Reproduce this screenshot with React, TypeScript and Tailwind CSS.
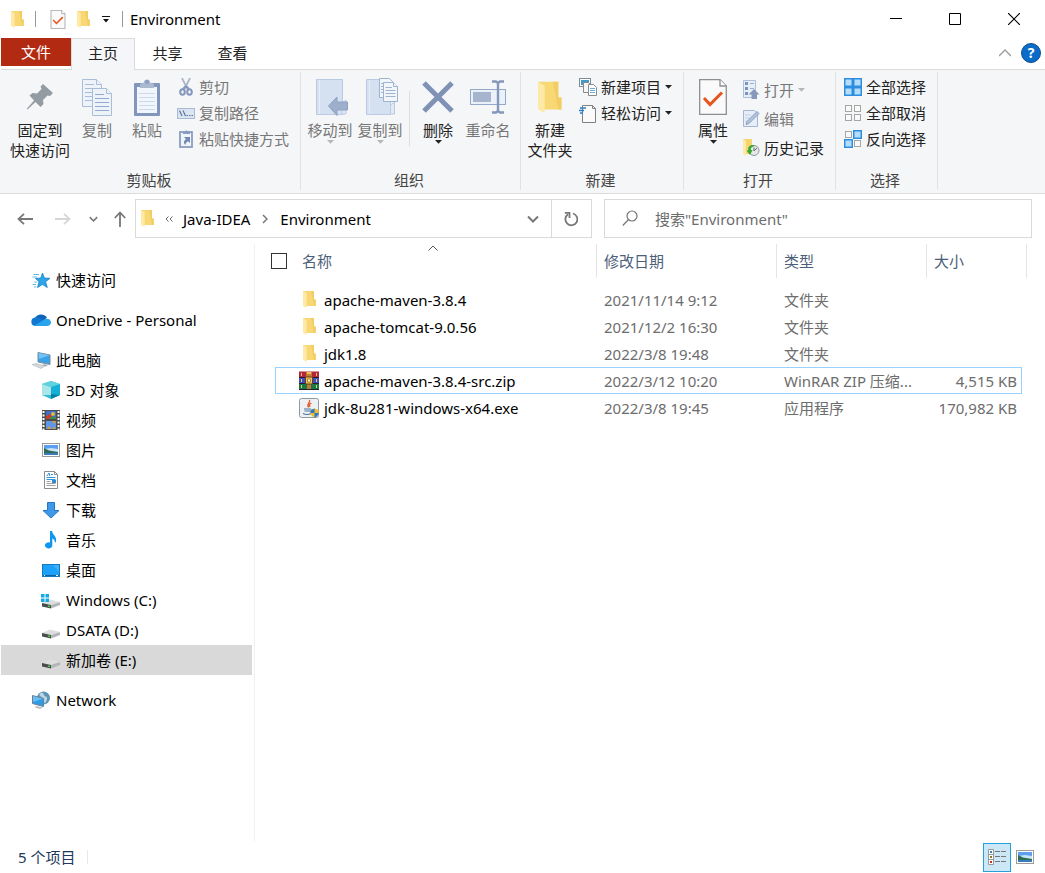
import type { ReactNode } from 'react';
import clsx from 'clsx';

interface IconProps {
  className?: string;
}

const FolderIcon = ({ className = 'h-[17px] w-[13px]' }: IconProps) => (
  <svg viewBox="0 0 13 17" className={className} aria-hidden>
    <path d="M0 0H11V8.5H12.7V15H3L0 14Z" fill="#f8d775" />
    <path d="M8 0H11V8.5H12.7V15H11Z" fill="#f3cd63" />
    <path d="M0 0L3.6 2V17L0 14.8Z" fill="#ffe9a6" />
  </svg>
);

const CheckDocIcon = ({ className }: IconProps) => (
  <svg viewBox="0 0 28 36" className={className} aria-hidden>
    <path d="M.7 .7H21L27.3 7V35.3H.7Z" fill="#fafafa" stroke="#8e8e8e" strokeWidth="1.3" />
    <path d="M21 .7V7H27.3" fill="#fff" stroke="#8e8e8e" strokeWidth="1.3" />
    <path d="M5 19L11 25.5L23 13.5" fill="none" stroke="#e8541c" strokeWidth="3" />
  </svg>
);

const PinIcon = () => (
  <svg width="28" height="28" viewBox="0 0 28 28" aria-hidden>
    <path
      d="M17 1L27 10L24 13L21.500 12.500L17 17L17.500 21L14.500 24L9.500 19L1.500 26.500L.8 25.800L8 17.500L3.500 12.500L6.500 10L11 10.500L15.500 6L14.500 3.500Z"
      fill="#949ca3"
    />
  </svg>
);

const CopyIcon = () => (
  <svg width="32" height="37" viewBox="0 0 32 37" aria-hidden>
    <g fill="#eef3fa" stroke="#a9bcd8">
      <path d="M1.500 .5H15.500L20.500 5.500V27.500H1.500Z" />
      <path d="M15.500 .5V5.500H20.500" />
      <path d="M4 5.500H13M4 9.500H17M4 13.500H11M4 17.500H11M4 21.500H11" />
      <path d="M11.500 9.500H25.500L30.500 14.500V36.500H11.500Z" />
      <path d="M25.500 9.500V14.500H30.500" />
      <path d="M14 15.500H23M14 19.500H28M14 23.500H28M14 27.500H28M14 31.500H28" stroke="#93abcf" />
    </g>
  </svg>
);

const PasteIcon = () => (
  <svg width="28" height="37" viewBox="0 0 28 37" aria-hidden>
    <rect x="1" y="4" width="26" height="33" rx="1" fill="#8296bd" />
    <rect x="4" y="8" width="20" height="26" fill="#f1f6fc" />
    <path d="M6 14.500H22M6 18.500H22M6 22.500H22M6 26.500H22M6 30.500H22" stroke="#ccd9ea" />
    <path d="M7 9V5L11 3.500A3 3 0 0 1 17 3.500L21 5V9Z" fill="#aab8d0" />
    <circle cx="14" cy="3" r="2" fill="#8b9dc0" />
  </svg>
);

const CutIcon = () => (
  <svg width="18" height="18" viewBox="0 0 18 18" aria-hidden>
    <path d="M5 0L11 12M13 0L7 12" stroke="#a9b4c8" strokeWidth="1.700" />
    <g fill="none" stroke="#8396bd" strokeWidth="2">
      <ellipse cx="5.500" cy="14" rx="2.300" ry="2.800" />
      <ellipse cx="12.500" cy="14" rx="2.300" ry="2.800" />
    </g>
    <path d="M9 8L12 11M9 8L6 11" stroke="#8396bd" strokeWidth="2" />
  </svg>
);

const CopyPathIcon = () => (
  <svg width="18" height="18" viewBox="0 0 18 18" aria-hidden>
    <rect x=".5" y="4.500" width="17" height="10" fill="#dbe5f2" stroke="#a9bad4" />
    <path d="M2.500 6.500L5 12M6 6.500L8.500 12" stroke="#5d759f" strokeWidth="1.200" />
    <path d="M9.500 11.500H11M12 11.500H13.500M14.500 11.500H16" stroke="#5d759f" />
  </svg>
);

const PasteShortcutIcon = () => (
  <svg width="18" height="20" viewBox="0 0 18 20" aria-hidden>
    <rect x="3" y="3" width="12" height="15" fill="#f0f5fb" stroke="#8a9dc0" strokeWidth="1.800" />
    <path d="M6 5V2.500H8A1.700 1.700 0 0 1 11 2.500H13V5Z" fill="#8a9dc0" />
    <path d="M7 8H13V14L11 12.200C9.500 13 8.500 14 8.500 16C6.200 14 6.600 11.500 9 10.200Z" fill="#7389b3" />
  </svg>
);

const MoveToIcon = () => (
  <svg width="36" height="38" viewBox="-3 0 36 38" aria-hidden>
    <path d="M1.500 1.500H27.500V36.500H1.500Z" fill="#d5e1f1" stroke="#b9cae2" />
    <path d="M4.500 2V36" stroke="#e6eef8" />
    <path d="M27 25L31 22V36H27Z" fill="#e1eaf5" stroke="#b9cae2" />
    <path d="M13.500 28L22 19V24H32.500V32H22V37.500Z" fill="#9dafcb" stroke="#8da2c4" />
  </svg>
);

const CopyToIcon = () => (
  <svg width="36" height="38" viewBox="-3 0 36 38" aria-hidden>
    <path d="M1.500 1.500H25.500V36.500H1.500Z" fill="#d5e1f1" stroke="#b9cae2" />
    <path d="M4.500 2V36" stroke="#e6eef8" />
    <path d="M25.500 36V27L29.500 24V36Z" fill="#e1eaf5" stroke="#b9cae2" />
    <g fill="#f2f6fb" stroke="#9fb3d1">
      <path d="M14.500 .5H24.500L27.500 3.500V19.500H14.500Z" />
      <path d="M16 5.500H22M16 8.500H19M16 11.500H19M16 14.500H19" />
      <path d="M18.500 4.500H28.500L32.500 8.500V23.500H18.500Z" />
      <path d="M28.500 4.500V8.500H32.500M20.500 9.500H27M20.500 12.500H30.500M20.500 15.500H30.500M20.500 18.500H30.500" />
    </g>
  </svg>
);

const DeleteIcon = () => (
  <svg width="32" height="32" viewBox="0 0 32 32" aria-hidden>
    <path d="M2 2L30 30M30 2L2 30" stroke="#7f92b6" strokeWidth="5" />
  </svg>
);

const RenameIcon = () => (
  <svg width="36" height="34" viewBox="0 0 36 34" aria-hidden>
    <rect x=".5" y="9.500" width="35" height="15" fill="#eaf1f9" stroke="#94a9ca" />
    <rect x="3" y="12" width="18" height="10" fill="#a6b4ce" />
    <path d="M22 1.500H26L28 3L30 1.500H34M28 2.500V31.500M22 32.500H26L28 31L30 32.500H34" fill="none" stroke="#8497bc" strokeWidth="2.400" />
  </svg>
);

const NewItemIcon = () => (
  <svg width="18" height="18" viewBox="0 0 18 18" aria-hidden>
    <rect x=".5" y=".5" width="11" height="8" fill="#fff" stroke="#7e8c96" />
    <rect x="2" y="2" width="8" height="5" fill="#4199c6" />
    <path d="M4.500 4.500H9.500L11.500 6.500V14.500H4.500Z" fill="#f5f5f5" stroke="#8b8b8b" />
    <path d="M9.500 6.500H14.500L17.500 9.500V17.500H9.500Z" fill="#fff" stroke="#8b8b8b" />
    <path d="M11 10.500H16M11 12.500H16M11 14.500H16" stroke="#68aeda" />
  </svg>
);

const EasyAccessIcon = () => (
  <svg width="18" height="19" viewBox="0 0 18 19" aria-hidden>
    <path d="M3.500 1.500H13.500L16.500 4.500V18.500H3.500Z" fill="#fafafa" stroke="#818181" />
    <path d="M13.500 1.500V4.500H16.500" fill="none" stroke="#818181" />
    <path d="M1 4H7M0 6.500H5M1 9H4" stroke="#2b7fc3" strokeWidth="1.400" />
  </svg>
);

const OpenIcon = () => (
  <svg width="18" height="19" viewBox="0 0 18 19" aria-hidden>
    <path d="M1.500 .5H13.500V17.500H1.500Z" fill="#e6eef8" stroke="#aebfd8" />
    <path d="M3 2H6V5H3ZM3 7H6V10H3ZM3 12H6V15H3Z" fill="#7e93b8" />
    <path d="M8 3.500H12M8 8.500H12" stroke="#9cb0ce" />
    <path d="M12 9L17.500 14.500H15V19H9.500V14.500H6.500Z" fill="#8699bd" />
  </svg>
);

const EditIcon = () => (
  <svg width="18" height="19" viewBox="0 0 18 19" aria-hidden>
    <path d="M1.500 1.500H12.500L15.500 4.500V17.500H1.500Z" fill="#e6eef8" stroke="#a4b6d2" />
    <path d="M3 6H9M3 9H8M3 12H6" stroke="#c3d1e4" />
    <path d="M4 15.500L5 12.500L15 2.500L17 4.500L7 14.500Z" fill="#b4c3da" stroke="#8ba0c3" />
  </svg>
);

const HistoryIcon = () => (
  <svg width="18" height="19" viewBox="0 0 18 19" aria-hidden>
    <path d="M1 1H10V16H4L1 15Z" fill="#f6d470" />
    <path d="M1 1L4 3V18L1 16Z" fill="#ffe9a6" />
    <circle cx="12" cy="12.500" r="5" fill="#e5e8e8" stroke="#8e9695" />
    <path d="M12 9.500V13L15 10" fill="none" stroke="#5f6a6e" />
    <path d="M12 7C7.500 6.500 5.500 9.500 6.500 12.500L4.500 12.500L8 17L10.500 12H8.800C8.500 10 10 8.500 12 8.500Z" fill="#34a82f" />
  </svg>
);

const squares = [
  [0, 0],
  [9, 0],
  [0, 9],
  [9, 9],
];

// `filled` lists the squares that are highlighted, in reading order.
const SelectIcon = ({ filled }: { filled: number[] }) => (
  <svg width="18" height="18" viewBox="0 0 18 18" aria-hidden>
    {squares.map(([x, y], i) =>
      filled.includes(i) ? (
        <rect key={i} x={x + 0.75} y={y + 0.75} width="7.500" height="7.500" fill="#b4ddfb" stroke="#2d8ee0" strokeWidth="1.500" />
      ) : (
        <rect key={i} x={x + 1.5} y={y + 1.5} width="6" height="6" fill="#fafafa" stroke="#a5a5a5" />
      ),
    )}
  </svg>
);

const StarIcon = () => (
  <svg width="20" height="20" viewBox="0 0 20 20" aria-hidden>
    <path d="M2.500 4.500H8M1.500 7H6M3.500 12H6M1.500 14.500H5M3 17H5" stroke="#5fb8ef" />
    <path d="M11.500 3L13.300 8L19 8.300L14.600 11.700L16.300 17.500L11.500 14.400L6.500 17.500L8.100 11.800L4.500 8.500L9.800 8Z" fill="#2fa4e8" stroke="#1482c6" strokeWidth=".8" />
  </svg>
);

const OneDriveIcon = () => (
  <svg width="20" height="20" viewBox="0 0 20 20" aria-hidden>
    <path d="M4 8A7 6.500 0 0 1 16 7.500L11 12Z" fill="#0f63b8" />
    <path d="M4 16A4.300 4.300 0 0 1 4 7.500C8 6.500 10 9 13 11L5 16Z" fill="#1279d3" />
    <path d="M3 15.800L12 10.500C14 8 19.500 8 20 12.300C20 15 18 16 16.500 16H4Z" fill="#27a4ec" />
  </svg>
);

const ComputerIcon = () => (
  <svg width="20" height="20" viewBox="0 0 20 20" aria-hidden>
    <path d="M7 2.500L19 5V14.500L7 12Z" fill="#39a2eb" stroke="#7c8b96" />
    <path d="M7.500 3L18.500 5.300L8 9Z" fill="#72c4f7" />
    <path d="M13 14L17 15L15 16.500L11 15.500Z" fill="#aab1b6" />
    <path d="M1 14.500L5 13.500L14 16L10 18.500Z" fill="#d5d9dc" stroke="#b0b6ba" strokeWidth=".6" />
  </svg>
);

const CubeIcon = () => (
  <svg width="20" height="20" viewBox="0 0 20 20" aria-hidden>
    <path d="M10 1L19 4V15L10 19L1 15V4Z" fill="#30bdd2" />
    <path d="M1 4L10 7V15L1 15Z" fill="#a8e6ea" />
    <path d="M10 7L19 4V15L10 14Z" fill="#16b0d6" />
    <path d="M1 4L10 1L19 4L10 7Z" fill="#5fd2df" />
    <path d="M10 14L19 15L10 19Z" fill="#0782a3" />
  </svg>
);

const VideoIcon = () => (
  <svg width="20" height="20" viewBox="0 0 20 20" aria-hidden>
    <rect x="1" width="18" height="20" fill="#4d4d4d" />
    <path d="M2.500 1V20M17.500 1V20" stroke="#fff" strokeWidth="2" strokeDasharray="2 1.500" />
    <rect x="5" y="1" width="10" height="8" fill="#3f6fd0" />
    <rect x="5" y="11" width="10" height="8" fill="#6196e8" />
    <path d="M5 6L9 4L12 8L7 9H5Z" fill="#cb3d2b" />
    <circle cx="12" cy="4" r="2" fill="#e7ba2d" />
    <path d="M9 7H15V9H9Z" fill="#3e8e3f" />
    <path d="M11 11H15L13 14ZM6 19L8 16L10 19ZM11 19L13 17L15 19Z" fill="#d2a32e" />
  </svg>
);

const PictureIcon = () => (
  <svg width="20" height="20" viewBox="0 0 20 20" aria-hidden>
    <rect x="1.500" y="3.500" width="17" height="13" fill="#fff" stroke="#9b9b9b" />
    <rect x="3" y="5" width="14" height="5" fill="#5c9ff0" />
    <path d="M3 9L10 8L17 9V15H3Z" fill="#c8e4f7" />
    <path d="M3 8L8 10.500L17 12V13H3Z" fill="#2c6b54" />
    <path d="M3 13H17V15H3Z" fill="#3a7cbb" />
  </svg>
);

const DocumentIcon = () => (
  <svg width="20" height="20" viewBox="0 0 20 20" aria-hidden>
    <path d="M3.500 1.500H13.500L16.500 4.500V18.500H3.500Z" fill="#fff" stroke="#8d8d8d" />
    <path d="M13.500 1.500V4.500H16.500" fill="none" stroke="#8d8d8d" />
    <path d="M6 6L8 3L9 6M10 4.500H12M5.500 7.500H14.500M5.500 9.500H14.500" fill="none" stroke="#2f94d8" />
    <path d="M5.500 11.500H9.500M5.500 13.500H14.500M5.500 15.500H14.500" stroke="#a0a0a0" />
    <rect x="11" y="10" width="4" height="3" fill="#3488cf" />
  </svg>
);

const DownloadIcon = () => (
  <svg width="20" height="20" viewBox="0 0 20 20" aria-hidden>
    <path d="M6.500 2.500H13.500V10.500H18L10 18L2 10.500H6.500Z" fill="#3f98e8" stroke="#2077c3" />
  </svg>
);

const MusicIcon = () => (
  <svg width="20" height="20" viewBox="0 0 20 20" aria-hidden>
    <path d="M9 1H11C11.500 5 16 6 15 11.500L14 13C14 10 12.500 9 11.300 8.500V15A3.700 3 0 1 1 9 12.600Z" fill="#0f97ee" />
  </svg>
);

const DesktopIcon = () => (
  <svg width="20" height="20" viewBox="0 0 20 20" aria-hidden>
    <rect x="1.500" y="4.500" width="17" height="12" fill="#1ba1fa" stroke="#1479bd" />
    <path d="M12 5H18V12Z" fill="#3cb2ff" />
    <path d="M2 15.500H18" stroke="#0c61a0" />
    <path d="M3 15.500H4M15 15.500H17" stroke="#fff" />
  </svg>
);

const DriveIcon = ({ system = false }: { system?: boolean }) => (
  <svg width="20" height="20" viewBox="0 0 20 20" aria-hidden>
    <path d="M1 13L9 9.500L19 12L10 15Z" fill="#dcdedf" />
    <path d="M1 13L10 15V18.500L1 16.500Z" fill="#4a4d4f" />
    <path d="M10 15L19 12V15L10 18.500Z" fill="#b3b6b8" />
    <path d="M7 16L9 16.500" stroke="#46d23c" strokeWidth="1.500" />
    {system && <path d="M0 4H3.500V7.500H0ZM4.500 4H8V7.500H4.500ZM0 8.500H3.500V12H0ZM4.500 8.500H8V12H4.500Z" fill="#13a9e8" />}
  </svg>
);

const NetworkIcon = () => (
  <svg width="20" height="20" viewBox="0 0 20 20" aria-hidden>
    <circle cx="12.500" cy="8" r="6.500" fill="#5e93b5" />
    <path d="M10 2.500C14 3 12 6 15 6.500C17 7 16 11 14 13.500C12 11 13 8 10.500 7C8 6 8 4 10 2.500Z" fill="#b9d5e2" />
    <path d="M1.500 5.500L12.500 8.500V16.500L1.500 13.500Z" fill="#2d9ce8" stroke="#6d7f8c" />
    <path d="M2 6L12 8.700L2 12Z" fill="#68bdf4" />
    <path d="M5 16L12 17.500L9 19L4 17.500Z" fill="#b9bfc3" />
  </svg>
);

const RarIcon = () => (
  <svg width="20" height="19" viewBox="0 0 20 19" aria-hidden>
    <rect width="20" height="6" y=".5" fill="#b3243f" />
    <rect width="20" height="6" y="6.500" fill="#3f4fc0" />
    <rect width="20" height="6" y="12.500" fill="#177a46" />
    <path d="M0 6.500H20M0 12.500H20M0 18.500H20" stroke="#2a1d2b" />
    <path d="M2.500 2V5M2.500 8V11M2.500 14V17M17.500 2V5M17.500 8V11M17.500 14V17" stroke="#f0c95c" />
    <path d="M7 1H13V6H7ZM8 13H12V18H8Z" fill="#c27a35" />
    <rect x="6.500" y="6" width="7" height="7" rx="1" fill="#f2c84c" stroke="#6b3d18" />
    <rect x="8.500" y="8" width="3" height="3" fill="#fff1c0" stroke="#9a682a" strokeWidth=".7" />
    <path d="M8 1H12V3H8Z" fill="#f0c050" />
  </svg>
);

const JavaIcon = () => (
  <svg width="20" height="20" viewBox="0 0 20 20" aria-hidden>
    <rect x=".5" y=".5" width="19" height="19" rx="2" fill="#eef1f4" stroke="#8d9aa6" />
    <path d="M10.500 2C12 4.500 7 5.500 9.500 9.500M12.500 5C9.500 6 10.500 7.500 11 9" fill="none" stroke="#e3572b" strokeWidth="1.300" />
    <path d="M5 11H12M5.500 13H11.500M4 15.500C7 17 10 16.500 12 15.500" fill="none" stroke="#44749b" strokeWidth="1.200" />
    <path d="M15.500 10.500L19.500 12V14.500C19.500 17 18 18.500 15.500 19.800C13 18.500 11.500 17 11.500 14.500V12Z" fill="#f4bd2c" />
    <path d="M15.500 10.500V15H11.500V12ZM15.500 15H19.500C19.300 17.500 17.500 18.800 15.500 19.800Z" fill="#2e78c6" />
  </svg>
);

const DetailsViewIcon = () => (
  <svg width="20" height="18" viewBox="0 0 20 18" aria-hidden>
    <g fill="#fff" stroke="#999">
      <path d="M1.500 1.500H6.500V6.500H1.500ZM1.500 6.500H6.500V11.500H1.500ZM1.500 11.500H6.500V16.500H1.500Z" />
    </g>
    <path d="M3 3H5V5H3Z" fill="#3f7fc0" />
    <path d="M3 8H5V10H3Z" fill="#76802c" />
    <path d="M3 13H5V15H3Z" fill="#c2341c" />
    <path d="M8 3.500H13M14 3.500H19M8 8.500H13M14 8.500H19M8 13.500H13M14 13.500H19" stroke="#777" />
  </svg>
);

const SmallArrow = ({ muted = false }: { muted?: boolean }) => (
  <svg width="7" height="4" viewBox="0 0 7 4" aria-hidden>
    <path d="M0 0H7L3.500 3.800Z" fill={muted ? '#b4b6b8' : '#222'} />
  </svg>
);

const Chevron = ({ className }: IconProps) => (
  <svg width="12" height="8" viewBox="0 0 12 8" className={className} aria-hidden>
    <path d="M1 1.500L6 6.500L11 1.500" fill="none" stroke="currentColor" strokeWidth="2" />
  </svg>
);

interface BigButtonProps {
  icon: ReactNode;
  lines: string[];
  disabled?: boolean;
  arrow?: boolean;
  wide?: boolean;
}

const BigButton = ({ icon, lines, disabled, arrow, wide }: BigButtonProps) => (
  <button
    type="button"
    disabled={disabled}
    className={clsx(
      'flex shrink-0 flex-col items-center pt-1 leading-5 whitespace-nowrap',
      wide ? 'w-[60px]' : 'w-[50px]',
      disabled ? 'text-[#777]' : 'text-[#222]',
    )}
  >
    <span className="flex h-11 items-center pb-[2px]">{icon}</span>
    {lines.map((line) => (
      <span key={line}>{line}</span>
    ))}
    {arrow && <SmallArrow muted={disabled} />}
  </button>
);

interface SmallButtonProps {
  icon: ReactNode;
  label: string;
  disabled?: boolean;
  arrow?: boolean;
}

const SmallButton = ({ icon, label, disabled, arrow }: SmallButtonProps) => (
  <button
    type="button"
    disabled={disabled}
    className={clsx(
      'flex items-center gap-1 whitespace-nowrap',
      disabled ? 'text-[#777]' : 'text-[#222]',
    )}
  >
    <span className="flex w-[18px] shrink-0 justify-center">{icon}</span>
    {label}
    {arrow && <SmallArrow muted={disabled} />}
  </button>
);

interface RibbonGroupProps {
  title: string;
  className: string;
  children: ReactNode;
}

const RibbonGroup = ({ title, className, children }: RibbonGroupProps) => (
  <section
    className={clsx(
      'flex shrink-0 flex-col border-r border-[#e0e2e4]',
      className,
    )}
  >
    <div className="flex h-[98px] pl-1">{children}</div>
    <h2 className="pr-[3px] text-center leading-5 text-[#444]">{title}</h2>
  </section>
);

const TitleBar = () => (
  <header className="flex h-[38px] items-center">
    <div className="flex grow items-center pl-[11px]">
      <FolderIcon />
      <span className="ml-[11px] h-4 w-px bg-[#999]" />
      <button type="button" aria-label="属性" className="ml-[14px]">
        <CheckDocIcon className="h-[19px] w-4" />
      </button>
      <button type="button" aria-label="新建文件夹" className="ml-[11px]">
        <FolderIcon />
      </button>
      <button type="button" aria-label="自定义快速访问工具栏" className="ml-3">
        <svg width="8" height="8" viewBox="0 0 8 8" aria-hidden>
          <path d="M0 1.500H8" stroke="#111" />
          <path d="M1 4H7L4 7.500Z" fill="#111" />
        </svg>
      </button>
      <span className="mr-[7px] ml-3 h-4 w-px bg-[#999]" />
      <h1>Environment</h1>
    </div>
    <div className="flex h-full pr-[2px]">
      <button type="button" aria-label="最小化" className="flex w-[59px] items-center justify-center">
        <svg width="12" height="12" viewBox="0 0 12 12" aria-hidden>
          <path d="M0 5.500H12" stroke="#000" />
        </svg>
      </button>
      <button type="button" aria-label="最大化" className="flex w-[59px] items-center justify-center">
        <svg width="12" height="12" viewBox="0 0 12 12" aria-hidden>
          <path d="M.5 .5H11.500V11.500H.5Z" fill="none" stroke="#000" />
        </svg>
      </button>
      <button type="button" aria-label="关闭" className="flex w-[59px] items-center justify-center">
        <svg width="12" height="12" viewBox="0 0 12 12" aria-hidden>
          <path d="M0 0L12 12M12 0L0 12" stroke="#000" strokeWidth="1.200" />
        </svg>
      </button>
    </div>
  </header>
);

const Tabs = () => (
  <div className="flex h-8 pl-px text-[#222]">
    <div className="w-[70px] border-b border-[#dadbdc] pb-[3px]">
      <button type="button" className="h-full w-full bg-[#b32a12] text-white">
        文件
      </button>
    </div>
    <button type="button" className="w-[64px] border-x border-t border-[#dadbdc] bg-[#f5f6f7] pb-[3px]">
      主页
    </button>
    <button type="button" className="w-[65px] border-b border-[#dadbdc] pb-[2px]">
      共享
    </button>
    <button type="button" className="w-[65px] border-b border-[#dadbdc] pb-[2px]">
      查看
    </button>
    <div className="flex grow items-center justify-end gap-[10px] border-b border-[#dadbdc] pr-1 pb-[2px]">
      <button type="button" aria-label="最小化功能区">
        <svg width="12" height="8" viewBox="0 0 12 8" aria-hidden>
          <path d="M0 7L6 1L12 7" fill="none" stroke="#9a9a9a" strokeWidth="1.300" />
        </svg>
      </button>
      <button
        type="button"
        aria-label="帮助"
        className="flex size-5 items-center justify-center rounded-full border border-[#0b4f91] bg-[#0a6bc9] text-sm font-bold text-white"
      >
        ?
      </button>
    </div>
  </div>
);

const Ribbon = () => (
  <div className="flex border-b border-[#dadbdc] bg-[#f5f6f7] pt-[2px] pb-[3px] pl-px">
    <RibbonGroup title="剪贴板" className="w-[300px]">
      <span className="w-[5px]" />
      <BigButton wide icon={<PinIcon />} lines={['固定到', '快速访问']} />
      <span className="w-[2px]" />
      <BigButton disabled icon={<CopyIcon />} lines={['复制']} />
      <BigButton disabled icon={<PasteIcon />} lines={['粘贴']} />
      <div className="grid h-[82px] grid-rows-[26px_26px_26px] pt-[2px] pl-[5px]">
        <SmallButton disabled icon={<CutIcon />} label="剪切" />
        <SmallButton disabled icon={<CopyPathIcon />} label="复制路径" />
        <SmallButton disabled icon={<PasteShortcutIcon />} label="粘贴快捷方式" />
      </div>
    </RibbonGroup>
    <RibbonGroup title="组织" className="w-[220px]">
      <BigButton disabled arrow icon={<MoveToIcon />} lines={['移动到']} />
      <BigButton disabled arrow icon={<CopyToIcon />} lines={['复制到']} />
      <span className="mr-[3px] ml-1 mt-[19px] h-[55px] w-px bg-[#dcdee0]" />
      <BigButton arrow icon={<DeleteIcon />} lines={['删除']} />
      <BigButton disabled icon={<RenameIcon />} lines={['重命名']} />
    </RibbonGroup>
    <RibbonGroup title="新建" className="w-[163px]">
      <BigButton icon={<FolderIcon className="h-[35px] w-6" />} lines={['新建', '文件夹']} />
      <div className="grid h-[82px] grid-rows-[26px_26px] pt-[2px] pl-1">
        <SmallButton arrow icon={<NewItemIcon />} label="新建项目" />
        <SmallButton arrow icon={<EasyAccessIcon />} label="轻松访问" />
      </div>
    </RibbonGroup>
    <RibbonGroup title="打开" className="w-[152px]">
      <BigButton arrow icon={<CheckDocIcon className="h-9 w-7" />} lines={['属性']} />
      <div className="grid grid-rows-[29px_29px_29px] pt-[3px] pl-1">
        <SmallButton disabled arrow icon={<OpenIcon />} label="打开" />
        <SmallButton disabled icon={<EditIcon />} label="编辑" />
        <SmallButton icon={<HistoryIcon />} label="历史记录" />
      </div>
    </RibbonGroup>
    <RibbonGroup title="选择" className="w-[102px]">
      <div className="grid h-[82px] grid-rows-[26px_26px_26px] pt-[2px] pl-1">
        <SmallButton icon={<SelectIcon filled={[0, 1, 2, 3]} />} label="全部选择" />
        <SmallButton icon={<SelectIcon filled={[]} />} label="全部取消" />
        <SmallButton icon={<SelectIcon filled={[1, 2]} />} label="反向选择" />
      </div>
    </RibbonGroup>
  </div>
);

const AddressBar = () => (
  <div className="flex items-center pt-[5px] pr-[13px] pb-[6px] pl-[6px] text-[#777]">
    <button type="button" aria-label="后退" className="flex w-[38px] justify-center">
      <svg width="16" height="12" viewBox="0 0 16 12" aria-hidden>
        <path d="M16 6H1.500M7 .8L1.500 6L7 11.200" fill="none" stroke="#777" strokeWidth="1.800" />
      </svg>
    </button>
    <button type="button" disabled aria-label="前进" className="flex w-[38px] justify-center">
      <svg width="16" height="12" viewBox="0 0 16 12" aria-hidden>
        <path d="M0 6H14.500M9 .8L14.500 6L9 11.200" fill="none" stroke="#d6d6d6" strokeWidth="1.800" />
      </svg>
    </button>
    <button type="button" aria-label="最近的位置" className="flex w-[22px] justify-center">
      <Chevron className="h-[6px] w-[9px]" />
    </button>
    <button type="button" aria-label="上移" className="flex w-[31px] justify-center">
      <svg width="12" height="16" viewBox="0 0 12 16" aria-hidden>
        <path d="M6 16V1.500M.8 7L6 1.500L11.200 7" fill="none" stroke="#777" strokeWidth="1.800" />
      </svg>
    </button>
    <div className="flex h-[39px] flex-[457_1_0%] items-center border border-[#d9d9d9]">
      <nav aria-label="地址" className="flex grow items-center pl-[5px] text-black">
        <FolderIcon />
        <svg width="8" height="6" viewBox="0 0 8 6" className="ml-[11px]" aria-hidden>
          <path d="M3.500 .5L1 3L3.500 5.500M7.500 .5L5 3L7.500 5.500" fill="none" stroke="#666" />
        </svg>
        <a href="#java-idea" className="ml-[10px]">
          Java-IDEA
        </a>
        <svg width="6" height="10" viewBox="0 0 6 10" className="mx-3" aria-hidden>
          <path d="M1 1L5 5L1 9" fill="none" stroke="#777" strokeWidth="1.500" />
        </svg>
        <a href="#environment">Environment</a>
      </nav>
      <button type="button" aria-label="以前的位置" className="flex w-9 justify-center">
        <Chevron />
      </button>
      <button type="button" aria-label="刷新" className="flex h-full w-10 items-center justify-center border-l border-[#d9d9d9]">
        <svg width="14" height="16" viewBox="0 0 14 16" aria-hidden>
          <path d="M9 2.500A6 6 0 1 1 4 3.300" fill="none" stroke="#777" strokeWidth="1.800" />
          <path d="M.8 1.800H5.500V7" fill="none" stroke="#777" strokeWidth="1.800" />
        </svg>
      </button>
    </div>
    <label className="ml-3 flex h-[39px] flex-[428_1_0%] items-center gap-4 border border-[#d9d9d9]">
      <svg width="17" height="17" viewBox="0 0 17 17" className="ml-[17px] shrink-0" aria-hidden>
        <circle cx="10" cy="6" r="5" fill="none" stroke="#777" strokeWidth="1.200" />
        <path d="M6.500 9.500L.8 15.500" stroke="#777" strokeWidth="1.200" />
      </svg>
      <input
        type="text"
        aria-label="搜索"
        placeholder={'搜索"Environment"'}
        className="min-w-0 grow leading-5 outline-none placeholder:text-[#6d6d6d]"
      />
    </label>
  </div>
);

interface NavEntry {
  label: string;
  icon: ReactNode;
  selected?: boolean;
}

const NavLink = ({
  entry,
  nested,
}: {
  entry: NavEntry;
  nested?: boolean;
}) => (
  <a
    href={`#${encodeURIComponent(entry.label)}`}
    className={clsx(
      'flex h-[30px] items-center gap-[5px] whitespace-nowrap',
      nested ? 'pl-10' : 'pl-[30px]',
      entry.selected && 'bg-[#d9d9d9]',
    )}
  >
    {entry.icon}
    {entry.label}
  </a>
);

const thisPc: NavEntry[] = [
  { label: '3D 对象', icon: <CubeIcon /> },
  { label: '视频', icon: <VideoIcon /> },
  { label: '图片', icon: <PictureIcon /> },
  { label: '文档', icon: <DocumentIcon /> },
  { label: '下载', icon: <DownloadIcon /> },
  { label: '音乐', icon: <MusicIcon /> },
  { label: '桌面', icon: <DesktopIcon /> },
  { label: 'Windows (C:)', icon: <DriveIcon system /> },
  { label: 'DSATA (D:)', icon: <DriveIcon /> },
  { label: '新加卷 (E:)', icon: <DriveIcon />, selected: true },
];

const Sidebar = () => (
  <nav
    aria-label="导航窗格"
    className="flex w-[255px] shrink-0 flex-col gap-[10px] border-r border-[#f0f0f0] pt-[21px] pr-[2px] pl-px"
  >
    <NavLink entry={{ label: '快速访问', icon: <StarIcon /> }} />
    <NavLink entry={{ label: 'OneDrive - Personal', icon: <OneDriveIcon /> }} />
    <div>
      <NavLink entry={{ label: '此电脑', icon: <ComputerIcon /> }} />
      {thisPc.map((entry) => (
        <NavLink key={entry.label} entry={entry} nested />
      ))}
    </div>
    <NavLink entry={{ label: 'Network', icon: <NetworkIcon /> }} />
  </nav>
);

interface FileEntry {
  name: string;
  date: string;
  type: string;
  size?: string;
  icon: ReactNode;
  focused?: boolean;
}

const files: FileEntry[] = [
  { name: 'apache-maven-3.8.4', date: '2021/11/14 9:12', type: '文件夹', icon: <FolderIcon /> },
  { name: 'apache-tomcat-9.0.56', date: '2021/12/2 16:30', type: '文件夹', icon: <FolderIcon /> },
  { name: 'jdk1.8', date: '2022/3/8 19:48', type: '文件夹', icon: <FolderIcon /> },
  {
    name: 'apache-maven-3.8.4-src.zip',
    date: '2022/3/12 10:20',
    type: 'WinRAR ZIP 压缩...',
    size: '4,515 KB',
    icon: <RarIcon />,
    focused: true,
  },
  {
    name: 'jdk-8u281-windows-x64.exe',
    date: '2022/3/8 19:45',
    type: '应用程序',
    size: '170,982 KB',
    icon: <JavaIcon />,
  },
];

const FileTable = () => (
  <table className="w-full table-fixed border-separate border-spacing-0 text-left">
    <colgroup>
      <col className="w-1" />
      <col />
      <col className="w-[180px]" />
      <col className="w-[150px]" />
      <col className="w-[95px]" />
      <col className="w-[5px]" />
    </colgroup>
    <thead className="text-[#4c607a]">
      <tr className="h-[34px]">
        <th colSpan={2} className="relative border-r border-[#e5e5e5] p-0 font-normal">
          <svg width="10" height="6" viewBox="0 0 10 6" className="absolute top-px left-1/2 -translate-x-1/2" aria-hidden>
            <path d="M.5 5.500L5 1L9.500 5.500" fill="none" stroke="#555" />
          </svg>
          <label className="flex items-center gap-[15px]">
            <input type="checkbox" className="size-4 appearance-none border border-[#333] bg-white" />
            名称
          </label>
        </th>
        <th className="border-r border-[#e5e5e5] p-0 pl-[7px] font-normal">修改日期</th>
        <th className="border-r border-[#e5e5e5] p-0 pl-[7px] font-normal">类型</th>
        <th colSpan={2} className="border-r border-[#e5e5e5] p-0 pl-[7px] font-normal">
          大小
        </th>
      </tr>
    </thead>
    <tbody className="text-[#6d6d6d] before:block before:h-2 before:content-['']">
      {files.map((file) => {
        const edge = file.focused ? 'border-[#99d1ff]' : 'border-transparent';
        return (
          <tr key={file.name} className="h-[27px]">
            <td className="p-0" />
            <td className={clsx('border-y border-l p-0 text-black', edge)}>
              <span className="flex h-[25px] items-center gap-[5px] pl-[23px]">
                <span className="flex w-5 shrink-0 justify-center">{file.icon}</span>
                {file.name}
              </span>
            </td>
            <td className={clsx('border-y p-0 pl-[7px]', edge)}>{file.date}</td>
            <td className={clsx('border-y p-0 pl-[7px] whitespace-nowrap', edge)}>{file.type}</td>
            <td className={clsx('border-y border-r p-0 pr-1 text-right whitespace-nowrap', edge)}>
              {file.size}
            </td>
            <td className="p-0" />
          </tr>
        );
      })}
    </tbody>
  </table>
);

const StatusBar = () => (
  <footer className="flex h-8 items-center pr-[10px] pl-[18px] text-[#1e395b]">
    <span>5 个项目</span>
    <span className="ml-3 h-[14px] w-px bg-[#e8e8e8]" />
    <div className="ml-auto flex items-center gap-1">
      <button
        type="button"
        aria-label="详细信息"
        aria-pressed="true"
        className="flex h-[29px] w-7 items-center justify-center border border-[#26a0da] bg-[#cce8f6]"
      >
        <DetailsViewIcon />
      </button>
      <button type="button" aria-label="大图标">
        <PictureIcon />
      </button>
    </div>
  </footer>
);

export default function App() {
  return (
    <div className="flex min-h-screen flex-col bg-white font-['Noto_Sans','Noto_Sans_CJK_SC',sans-serif] text-[15px] leading-5 text-black">
      <TitleBar />
      <Tabs />
      <Ribbon />
      <AddressBar />
      <div className="flex grow">
        <Sidebar />
        <main className="min-w-0 grow pr-[18px] pl-4">
          <FileTable />
        </main>
      </div>
      <StatusBar />
    </div>
  );
}
